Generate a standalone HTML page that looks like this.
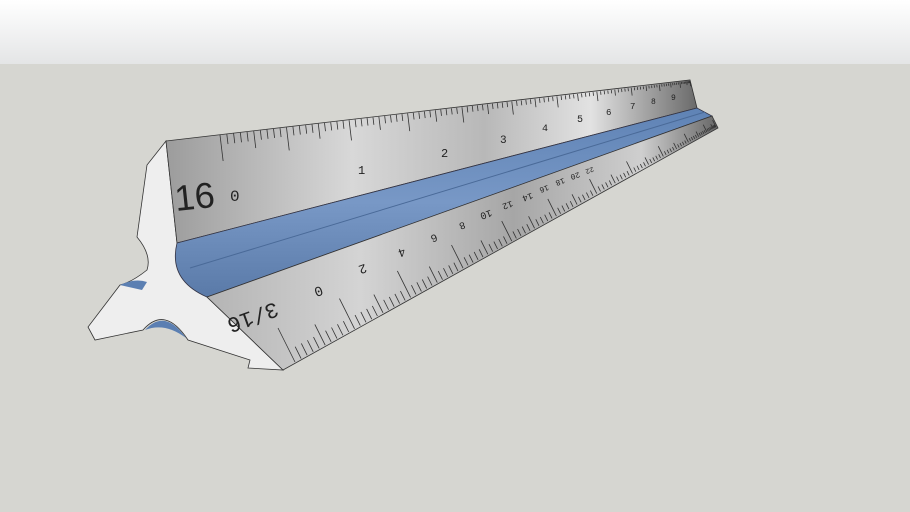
<!DOCTYPE html>
<html><head><style>
html,body{margin:0;padding:0;width:910px;height:512px;overflow:hidden;background:#d6d6d1}
svg{display:block}
text{font-family:"Liberation Mono",monospace;fill:#222}
</style></head><body>
<svg width="910" height="512" viewBox="0 0 910 512">
<defs>
<linearGradient id="sky" x1="0" y1="0" x2="0" y2="1"><stop offset="0" stop-color="#ffffff"/><stop offset="1" stop-color="#e4e5e6"/></linearGradient>
<linearGradient id="up" x1="0" y1="0" x2="1" y2="0"><stop offset="0" stop-color="#9c9c9c"/><stop offset="0.35" stop-color="#d8d8d8"/><stop offset="0.6" stop-color="#b8b8b8"/><stop offset="0.8" stop-color="#e2e2e2"/><stop offset="1" stop-color="#6a6a6a"/></linearGradient>
<linearGradient id="lo" x1="0" y1="0" x2="1" y2="0"><stop offset="0" stop-color="#b4b4b4"/><stop offset="0.3" stop-color="#d4d4d4"/><stop offset="0.6" stop-color="#a6a6a6"/><stop offset="0.85" stop-color="#cfcfcf"/><stop offset="1" stop-color="#666"/></linearGradient>
<linearGradient id="bl" x1="0" y1="0" x2="0" y2="1"><stop offset="0" stop-color="#5f83b5"/><stop offset="0.5" stop-color="#7898c6"/><stop offset="1" stop-color="#5a7aa8"/></linearGradient>
</defs>
<rect width="910" height="64" fill="url(#sky)"/>
<rect y="64" width="910" height="448" fill="#d6d6d1"/>
<path d="M166,141 L147,165 L137,237 Q152,255 147,270 Q132,282 120,285 L88,327 L95,340 L143,330 Q165,305 188,340 L250,360 L248,368 L283,370 L207,297 L177,243 Z" fill="#eeeeee" stroke="#333" stroke-width="0.8"/>
<path d="M120,285 Q135,278 147,282 L142,290 Z" fill="#5b7fb2"/>
<path d="M145,330 Q165,308 186,338 Q165,322 145,330 Z" fill="#5b7fb2"/>
<polygon points="166,141 690,80 697,108 177,243" fill="url(#up)" stroke="#333" stroke-width="0.8"/>
<path d="M177,243 L697,108 L712,116 L207,297 Q168,280 177,243 Z" fill="url(#bl)" stroke="#334" stroke-width="0.8"/>
<path d="M190,268 L705,112" stroke="#4a6a98" stroke-width="1"/>
<polygon points="207,297 712,116 718,128 283,370" fill="url(#lo)" stroke="#333" stroke-width="0.8"/>
<g stroke="#333" stroke-width="0.8" id="ut"></g>
<g id="lt" stroke="#333" stroke-width="0.8"></g>
<text x="176" y="211" font-size="36" transform="rotate(-6 176 211)" style="font-family:'Liberation Sans',sans-serif">16</text>
<text x="230" y="201" font-size="16">0</text>
<text x="358" y="174" font-size="12">1</text>
<text x="441" y="157" font-size="12">2</text>
<text x="500" y="143" font-size="11">3</text>
<text x="542" y="131" font-size="10">4</text>
<text x="577" y="122" font-size="10">5</text>
<text x="606" y="115" font-size="9">6</text>
<text x="630" y="109" font-size="9">7</text>
<text x="651" y="104" font-size="8">8</text>
<text x="671" y="100" font-size="8">9</text>
<g transform="rotate(160 260 318)"><text x="240" y="328" font-size="22">3/16</text></g>
<g transform="rotate(160 318 292)"><text x="313" y="297" font-size="14">0</text></g>
<g transform="rotate(160 362 270)"><text x="357" y="275" font-size="13">2</text></g>
<g transform="rotate(160 401 254)"><text x="396" y="259" font-size="12">4</text></g>
<g transform="rotate(160 433 240)"><text x="428" y="245" font-size="11">6</text></g>
<g transform="rotate(160 461 228)"><text x="456" y="233" font-size="10">8</text></g>
<g transform="rotate(160 485 217)"><text x="477" y="222" font-size="10">10</text></g>
<g transform="rotate(160 506 208)"><text x="498" y="213" font-size="9">12</text></g>
<g transform="rotate(160 526 200)"><text x="518" y="205" font-size="9">14</text></g>
<g transform="rotate(160 543 192)"><text x="536" y="197" font-size="8">16</text></g>
<g transform="rotate(160 559 185)"><text x="552" y="190" font-size="8">18</text></g>
<g transform="rotate(160 574 179)"><text x="567" y="184" font-size="8">20</text></g>
<g transform="rotate(160 588 174)"><text x="581" y="179" font-size="7">22</text></g>
</svg>
<script>
(function(){
var ns="http://www.w3.org/2000/svg";
function lerp(a,b,t){return [a[0]+(b[0]-a[0])*t,a[1]+(b[1]-a[1])*t];}
var ut=document.getElementById('ut'),lt=document.getElementById('lt');
var A=[220,135],B=[690,81];var n=110;
for(var i=0;i<=n;i++){var u=i/n;var t=1-Math.pow(1-u,1.6);var p=lerp(A,B,t);var s=1-t*0.8;var L=(i%10==0?26:(i%5==0?18:10))*s;
var l=document.createElementNS(ns,'line');l.setAttribute('x1',p[0]);l.setAttribute('y1',p[1]);l.setAttribute('x2',p[0]+L*0.12);l.setAttribute('y2',p[1]+L);ut.appendChild(l);}
var C=[295,362],D=[716,127];n=110;
for(var i=0;i<=n;i++){var u=i/n;var t=1-Math.pow(1-u,1.6);var p=lerp(C,D,t);var s=1-t*0.8;var L=(i%10==0?34:(i%5==0?22:12))*s;
var l=document.createElementNS(ns,'line');l.setAttribute('x1',p[0]);l.setAttribute('y1',p[1]);l.setAttribute('x2',p[0]-L*0.5);l.setAttribute('y2',p[1]-L);lt.appendChild(l);}
})();
</script>
</body></html>
